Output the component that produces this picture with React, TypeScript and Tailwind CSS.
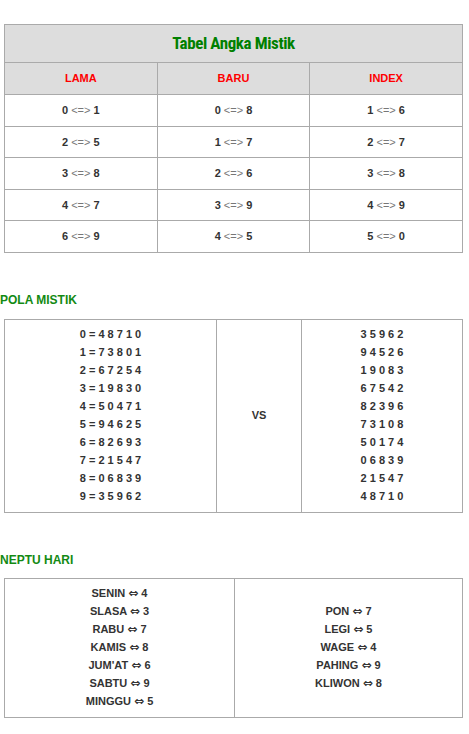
const rows = [
  ["0", "1", "0", "8", "1", "6"],
  ["2", "5", "1", "7", "2", "7"],
  ["3", "8", "2", "6", "3", "8"],
  ["4", "7", "3", "9", "4", "9"],
  ["6", "9", "4", "5", "5", "0"],
]

const polaLeft = [
  "0 = 4 8 7 1 0",
  "1 = 7 3 8 0 1",
  "2 = 6 7 2 5 4",
  "3 = 1 9 8 3 0",
  "4 = 5 0 4 7 1",
  "5 = 9 4 6 2 5",
  "6 = 8 2 6 9 3",
  "7 = 2 1 5 4 7",
  "8 = 0 6 8 3 9",
  "9 = 3 5 9 6 2",
]

const polaRight = [
  "3 5 9 6 2",
  "9 4 5 2 6",
  "1 9 0 8 3",
  "6 7 5 4 2",
  "8 2 3 9 6",
  "7 3 1 0 8",
  "5 0 1 7 4",
  "0 6 8 3 9",
  "2 1 5 4 7",
  "4 8 7 1 0",
]

const hari = [
  ["SENIN", "4"],
  ["SLASA", "3"],
  ["RABU", "7"],
  ["KAMIS", "8"],
  ["JUM'AT", "6"],
  ["SABTU", "9"],
  ["MINGGU", "5"],
]

const pasaran = [
  ["PON", "7"],
  ["LEGI", "5"],
  ["WAGE", "4"],
  ["PAHING", "9"],
  ["KLIWON", "8"],
]

function Pair({ a, b }: { a: string; b: string }) {
  return (
    <span>
      {a} <span className="font-normal text-[#777]">&lt;=&gt;</span> {b}
    </span>
  )
}

function Neptu({ d, n }: { d: string; n: string }) {
  return (
    <div className="h-[18px]">
      {d} <span className="font-['DejaVu_Sans',sans-serif] text-[12px] leading-none">⇔</span> {n}
    </div>
  )
}

export default function App() {
  return (
    <div className="w-[469px] bg-white pt-[24px] pb-[16px] text-[11px] font-bold text-[#333] font-['Liberation_Sans',Arial,sans-serif]">
      {/* tabel angka mistik */}
      <table className="mx-[4px] w-[459px] border-collapse border border-[#aaa] table-fixed">
        <thead>
          <tr className="bg-[#ddd]">
            <th
              colSpan={3}
              className="h-[38px] border border-[#aaa] text-center text-[17px] font-bold text-[#008000] font-['Roboto_Condensed','Liberation_Sans_Narrow',Roboto,sans-serif] font-stretch-condensed tracking-[-0.4px]"
            >
              Tabel Angka Mistik
            </th>
          </tr>
          <tr className="bg-[#ddd]">
            <th className="h-[32px] border border-[#aaa] font-bold text-[#ff0000]">LAMA</th>
            <th className="h-[32px] border border-[#aaa] font-bold text-[#ff0000]">BARU</th>
            <th className="h-[32px] border border-[#aaa] font-bold text-[#ff0000]">INDEX</th>
          </tr>
        </thead>
        <tbody>
          {rows.map((r, i) => (
            <tr key={i}>
              <td className="h-[31.5px] border border-[#aaa] text-center">
                <Pair a={r[0]} b={r[1]} />
              </td>
              <td className="h-[31.5px] border border-[#aaa] text-center">
                <Pair a={r[2]} b={r[3]} />
              </td>
              <td className="h-[31.5px] border border-[#aaa] text-center">
                <Pair a={r[4]} b={r[5]} />
              </td>
            </tr>
          ))}
        </tbody>
      </table>

      {/* pola mistik */}
      <h3 className="mt-[40px] mb-[12px] text-[12px] font-bold leading-[14px] text-[#138a13]">POLA MISTIK</h3>
      <table className="mx-[4px] w-[459px] border-collapse border border-[#aaa] table-fixed">
        <tbody>
          <tr>
            <td className="w-[212px] border border-[#aaa] pt-[5px] pb-[7px] text-center align-middle leading-[18px]">
              {polaLeft.map((l) => (
                <div key={l}>{l}</div>
              ))}
            </td>
            <td className="w-[85px] border border-[#aaa] text-center align-middle">VS</td>
            <td className="border border-[#aaa] pt-[5px] pb-[7px] text-center align-middle leading-[18px]">
              {polaRight.map((l) => (
                <div key={l}>{l}</div>
              ))}
            </td>
          </tr>
        </tbody>
      </table>

      {/* neptu hari */}
      <h3 className="mt-[40px] mb-[11px] text-[12px] font-bold leading-[14px] text-[#138a13]">NEPTU HARI</h3>
      <table className="mx-[4px] w-[459px] border-collapse border border-[#aaa] table-fixed">
        <tbody>
          <tr>
            <td className="w-[230px] border border-[#aaa] pt-[5px] pb-[7px] text-center align-middle leading-[18px]">
              {hari.map(([d, n]) => (
                <Neptu key={d} d={d} n={n} />
              ))}
            </td>
            <td className="border border-[#aaa] pt-[5px] pb-[7px] text-center align-middle leading-[18px]">
              {pasaran.map(([d, n]) => (
                <Neptu key={d} d={d} n={n} />
              ))}
            </td>
          </tr>
        </tbody>
      </table>
    </div>
  )
}
